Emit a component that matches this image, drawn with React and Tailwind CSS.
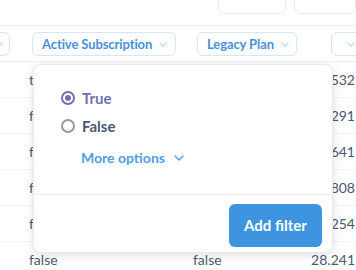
import React from "react";

const Chevron = ({ className }) => (
  <svg viewBox="0 0 10 6" className={className} fill="none" stroke="currentColor" strokeWidth="1.4" strokeLinecap="round" strokeLinejoin="round">
    <path d="M1 1l4 4 4-4" />
  </svg>
);

const Pill = ({ label, className }) => (
  <div className={`absolute top-[6px] h-[24px] flex items-center whitespace-nowrap rounded-[6px] border border-[#d4e6f7] bg-white ${className}`}>
    {label && <span className="text-[13px] font-bold text-[#4a90d9] leading-none tracking-[-0.1px]">{label}</span>}
    <Chevron className="w-[8px] h-[5px] text-[#b8d4ee] ml-[7px] shrink-0" />
  </div>
);

const rows = [
  ["true", "", "532"],
  ["false", "", "291"],
  ["false", "", "641"],
  ["false", "", "808"],
  ["false", "", "254"],
  ["false", "false", "28.241"],
];

export default function App() {
  return (
    <div className="relative w-[356px] h-[270px] overflow-hidden bg-white" style={{ fontFamily: "Lato, 'Noto Sans', sans-serif" }}>
      {/* top bar */}
      <div className="h-[26px] border-b border-[#efe9ec] flex">
        <div className="ml-[218px] w-[76px] h-[15px] -mt-[1px] border border-[#f0e6ea] rounded-b-[6px]" />
        <div className="ml-[8px] w-[70px] h-[15px] -mt-[1px] border border-[#f0e6ea] rounded-b-[6px]" />
      </div>
      {/* filter row */}
      <div className="relative h-[36px] border-b border-[#efefef]">
        <Pill className="left-[-40px] w-[50px] justify-end pr-[6px]" />
        <Pill label="Active Subscription" className="left-[32px] w-[144px] pl-[9px]" />
        <Pill label="Legacy Plan" className="left-[197px] w-[100px] pl-[9px]" />
        <Pill className="left-[331px] w-[40px] pl-[8px]" />
      </div>
      {/* data rows */}
      {rows.map((r, i) => (
        <div key={i} className="h-[36px] border-b border-[#f2f2f2] flex items-center text-[14px] text-[#4c5773] font-normal">
          <span className="w-[164px] pl-[29px]">{r[0]}</span>
          <span className="w-[100px] pl-[29px]">{r[1]}</span>
          <span className="flex-1 text-right pr-[1px]">{r[2]}</span>
        </div>
      ))}
      {/* popover */}
      <div className="absolute left-[33px] top-[64px] w-[300px] h-[189px] bg-white rounded-[8px] border border-[#ececec] shadow-[0_2px_10px_rgba(0,0,0,0.13)] flex flex-col">
        <div className="pt-[24px] pl-[27px] h-[130px] border-b border-[#ececec]">
          <div className="flex items-center h-[18px]">
            <span className="w-[14px] h-[14px] rounded-full border-2 border-[#7172ad] flex items-center justify-center">
              <span className="w-[6px] h-[6px] rounded-full bg-[#7172ad]" />
            </span>
            <span className="ml-[7px] text-[15px] font-bold text-[#7172ad]">True</span>
          </div>
          <div className="flex items-center h-[18px] mt-[10px]">
            <span className="w-[14px] h-[14px] rounded-full border-2 border-[#949aab]" />
            <span className="ml-[7px] text-[15px] font-bold text-[#4c5773]">False</span>
          </div>
          <div className="flex items-center mt-[12px] pl-[20px]">
            <span className="text-[14px] font-bold text-[#509ee3]">More options</span>
            <Chevron className="w-[10px] h-[6px] text-[#509ee3] ml-[9px]" />
          </div>
        </div>
        <div className="flex-1 flex items-start justify-end pt-[9px] pr-[10px]">
          <button className="w-[93px] h-[43px] rounded-[6px] bg-[#3e94df] text-white text-[15px] font-bold">Add filter</button>
        </div>
      </div>
    </div>
  );
}
